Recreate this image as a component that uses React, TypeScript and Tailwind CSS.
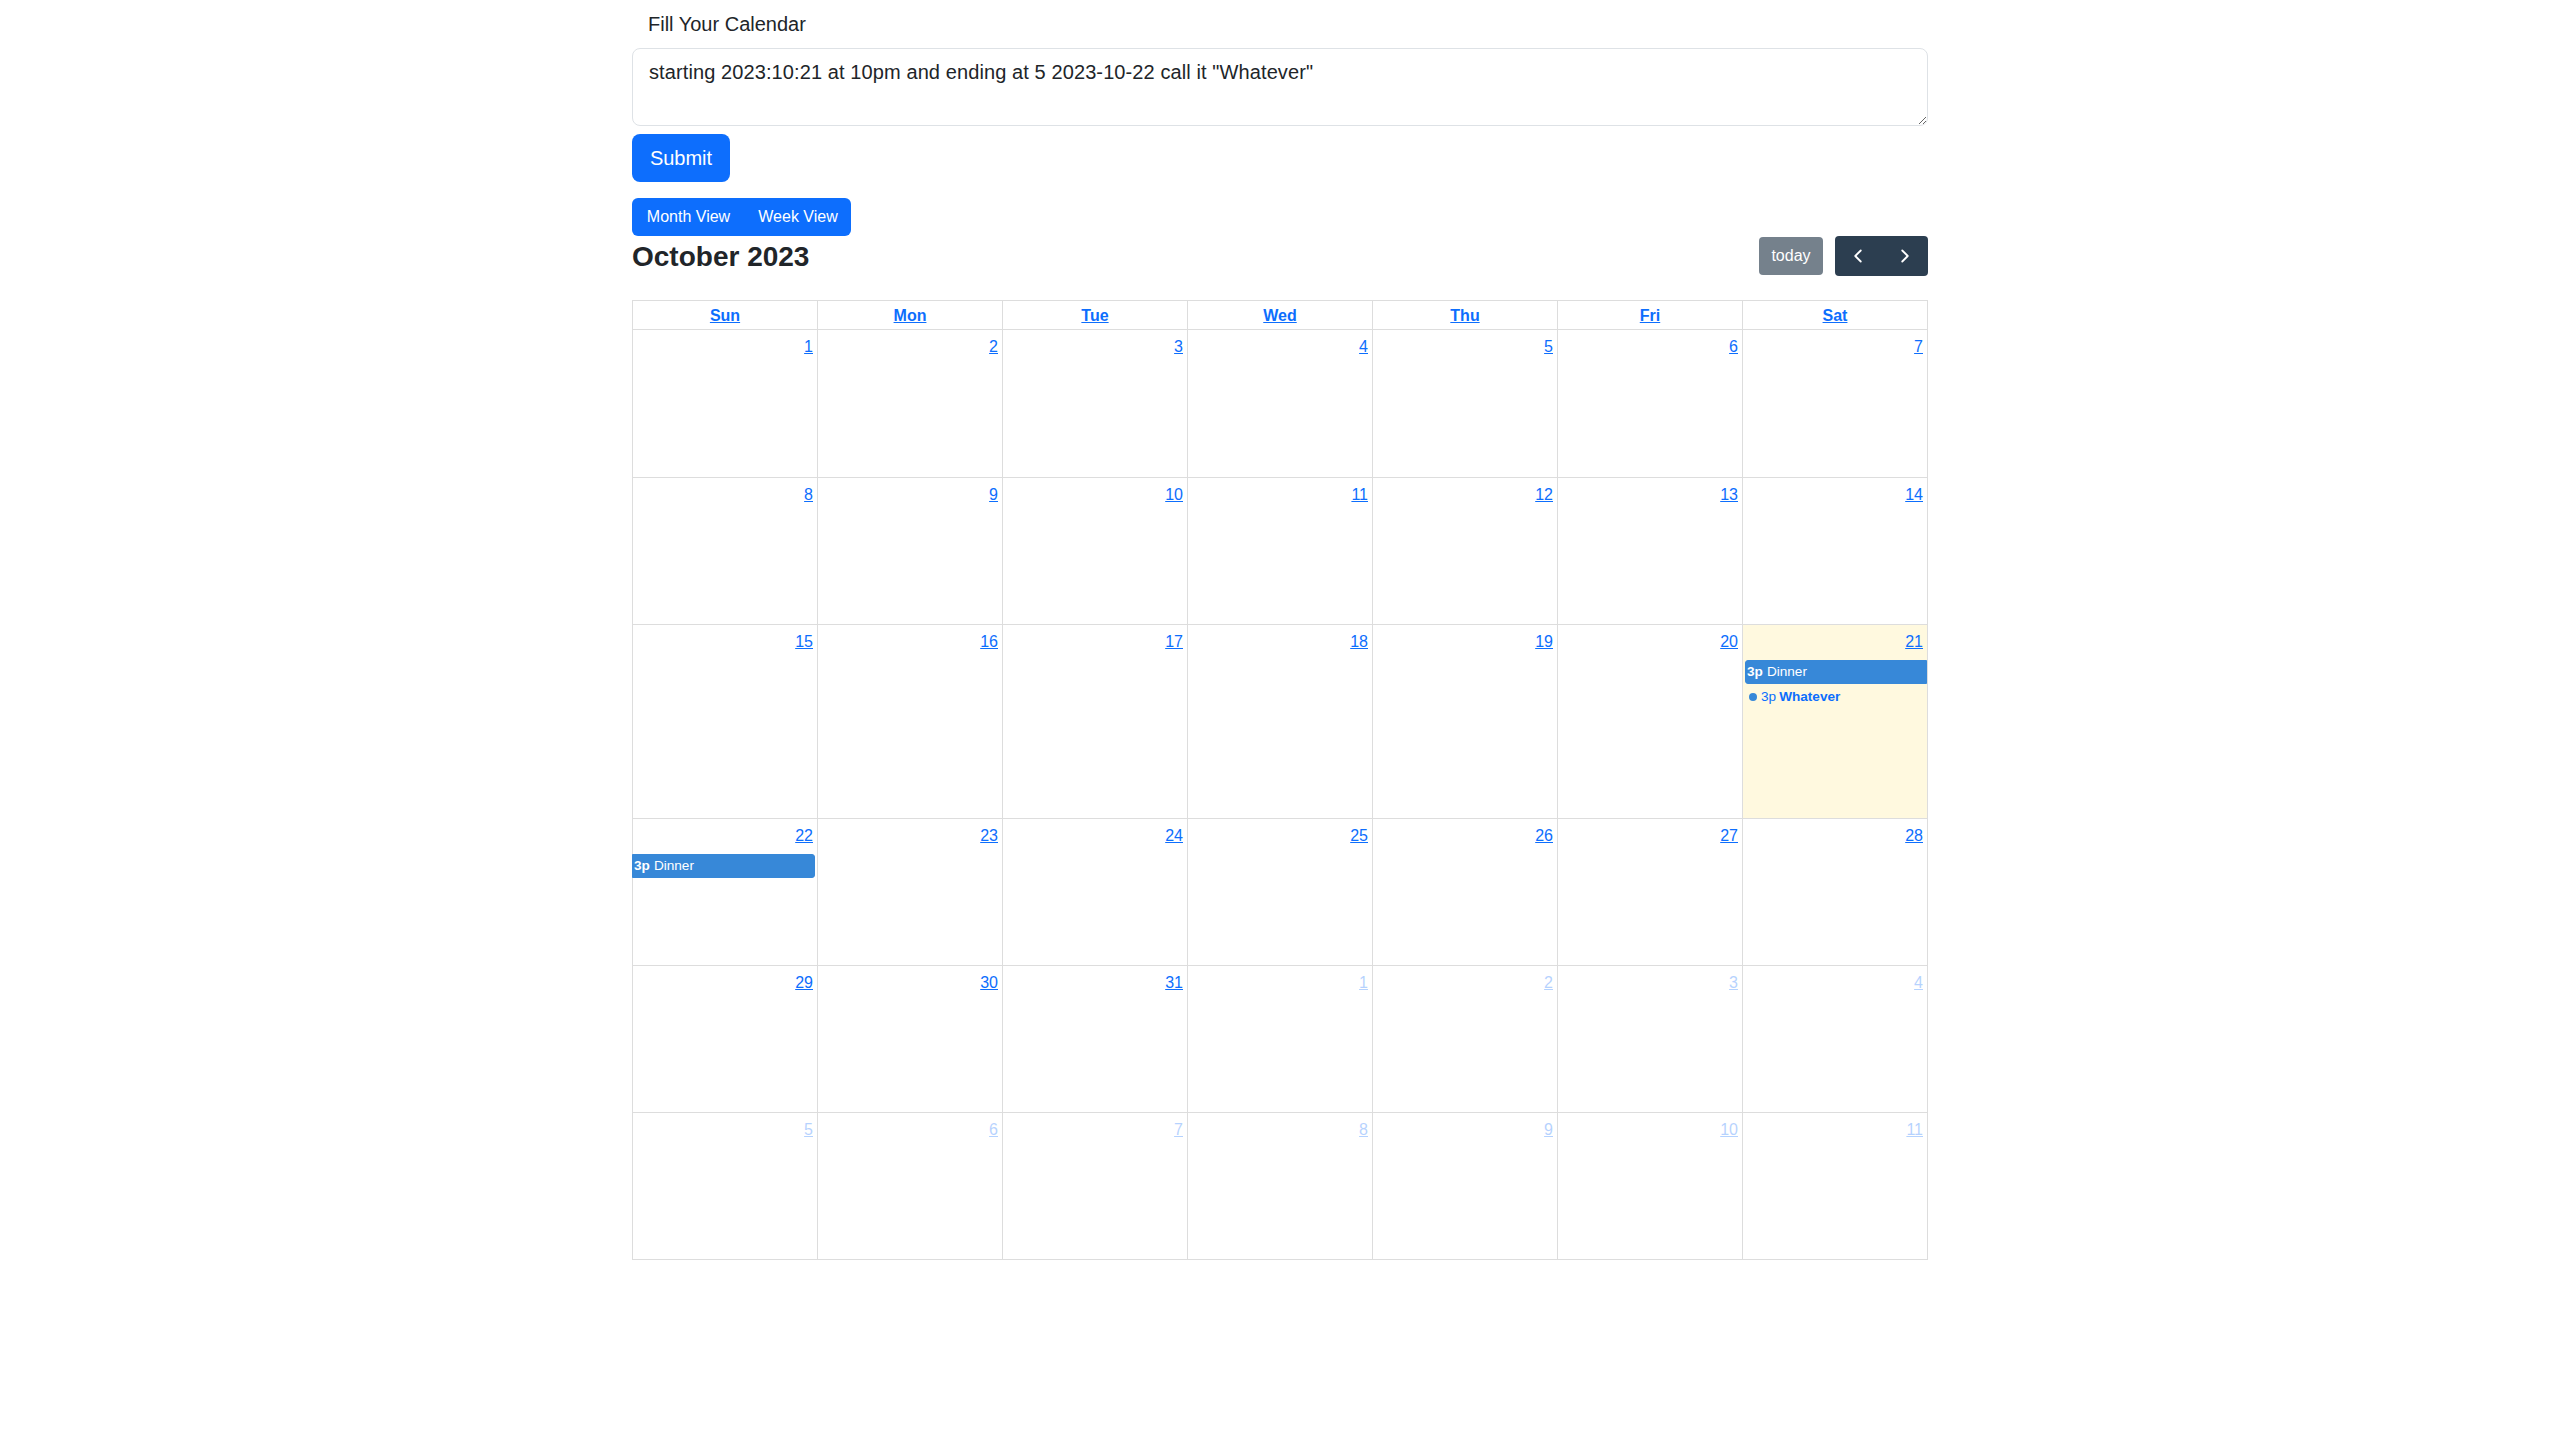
import React from "react";

type Day = { n: number; other?: boolean };

const weeks: Day[][] = [
  [1, 2, 3, 4, 5, 6, 7].map((n) => ({ n })),
  [8, 9, 10, 11, 12, 13, 14].map((n) => ({ n })),
  [15, 16, 17, 18, 19, 20, 21].map((n) => ({ n })),
  [22, 23, 24, 25, 26, 27, 28].map((n) => ({ n })),
  [
    { n: 29 },
    { n: 30 },
    { n: 31 },
    { n: 1, other: true },
    { n: 2, other: true },
    { n: 3, other: true },
    { n: 4, other: true },
  ],
  [5, 6, 7, 8, 9, 10, 11].map((n) => ({ n, other: true })),
];

const dayNames = ["Sun", "Mon", "Tue", "Wed", "Thu", "Fri", "Sat"];

function Chevron({ dir }: { dir: "left" | "right" }) {
  return (
    <svg width="22" height="22" viewBox="0 0 24 24" fill="none" stroke="white" strokeWidth="2" strokeLinecap="round" strokeLinejoin="round">
      {dir === "left" ? <path d="M15 18l-6-6 6-6" /> : <path d="M9 18l6-6-6-6" />}
    </svg>
  );
}

function BlockEvent({ continues, continued }: { continues?: boolean; continued?: boolean }) {
  return (
    <div
      className={
        "mt-[2px] h-[24px] bg-[#3788d8] border border-[#3788d8] text-white text-[13.6px] leading-[20px] px-[1px] py-[1px] whitespace-nowrap overflow-hidden " +
        (continues ? "mr-0 rounded-l-[3px] " : "mr-[2px] rounded-r-[3px] ") +
        (continued ? "-ml-px " : "ml-[2px] ")
      }
    >
      <span className="font-bold mr-[4px]">3p</span>
      <span>Dinner</span>
    </div>
  );
}

function DotEvent() {
  return (
    <div className="mt-[1px] ml-[2px] py-[2px] flex items-center text-[13.6px] leading-[20px] text-[#0d6efd] whitespace-nowrap">
      <span className="mx-[4px] w-[8px] h-[8px] rounded-full bg-[#3788d8]" />
      <span className="mr-[3px]">3p</span>
      <span className="font-bold">Whatever</span>
    </div>
  );
}

export default function App() {
  return (
    <div className="min-h-screen bg-white text-[#212529]" style={{ fontFamily: '"Liberation Sans", Arial, sans-serif' }}>
      <div className="mx-auto w-[1320px] px-3">
        <label className="block pl-4 pt-[9px] pb-[9px] text-[20px] leading-[30px]">Fill Your Calendar</label>
        <textarea
          readOnly
          rows={2}
          defaultValue={'starting 2023:10:21 at 10pm and ending at 5 2023-10-22 call it "Whatever"'}
          className="block w-full h-[78px] px-4 py-2 text-[20px] leading-[30px] tracking-[0.1px] border border-[#dee2e6] rounded-lg resize-y outline-none text-[#212529]"
        />
        <button className="mt-2 h-[48px] w-[98px] rounded-lg bg-[#0d6efd] text-white text-[20px] leading-[30px]">Submit</button>

        <div className="mt-4 flex">
          <div className="flex rounded-md overflow-hidden bg-[#0d6efd] text-white text-[16px] leading-[24px]">
            <button className="h-[38px] w-[113px]">Month View</button>
            <button className="h-[38px] w-[106px]">Week View</button>
          </div>
        </div>

        <div className="flex items-center justify-between h-[40px]">
          <h2 className="text-[28px] leading-[34px] font-bold pt-[2px]">October 2023</h2>
          <div className="flex items-center">
            <button className="h-[38px] w-[64px] rounded-[4px] bg-[#2c3e50] opacity-65 text-white text-[16px] leading-[24px]">today</button>
            <div className="ml-3 flex rounded-[4px] overflow-hidden bg-[#2c3e50]">
              <button className="h-[40px] w-[46.5px] flex items-center justify-center">
                <Chevron dir="left" />
              </button>
              <button className="h-[40px] w-[46.5px] flex items-center justify-center">
                <Chevron dir="right" />
              </button>
            </div>
          </div>
        </div>

        <div className="mt-6 border-t border-l border-[#ddd]">
          <div className="grid grid-cols-7">
            {dayNames.map((d) => (
              <div key={d} className="h-[29px] border-r border-b border-[#ddd] pt-[3px] pb-[1px] px-1 text-center text-[16px] leading-[24px] font-bold">
                <a className="text-[#0d6efd] underline">{d}</a>
              </div>
            ))}
          </div>
          {weeks.map((week, wi) => (
            <div key={wi} className="grid grid-cols-7">
              {week.map((day, di) => {
                const isToday = wi === 2 && di === 6;
                return (
                  <div
                    key={di}
                    className={
                      "border-r border-b border-[#ddd] " +
                      (wi === 0 ? "h-[148px] " : wi === 2 ? "h-[194px] " : "h-[147px] ") +
                      (isToday ? "bg-[#fff9df]" : "bg-white")
                    }
                  >
                    <div className="flex justify-end">
                      <a className={"px-1 pt-[5px] pb-[4px] text-[16px] leading-[24px] text-[#0d6efd] underline " + (day.other ? "opacity-30" : "")}>
                        {day.n}
                      </a>
                    </div>
                    {isToday && (
                      <>
                        <BlockEvent continues />
                        <DotEvent />
                      </>
                    )}
                    {wi === 3 && di === 0 && <BlockEvent continued />}
                  </div>
                );
              })}
            </div>
          ))}
        </div>
      </div>
    </div>
  );
}
